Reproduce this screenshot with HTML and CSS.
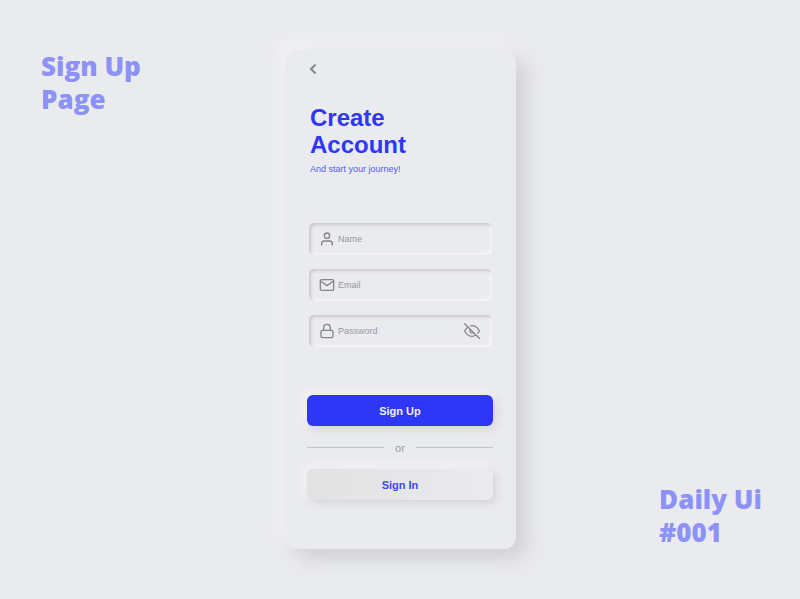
FILE: index.html
```html
<!DOCTYPE html>
<html lang="en">
<head>
<meta charset="utf-8">
<meta name="viewport" content="width=device-width, initial-scale=1">
<title>Create Account</title>
<link rel="stylesheet" href="styles.css">
</head>
<body>
<div class="page">
  <h2 class="caption">Sign Up<br>Page</h2>
  <main class="card">
    <a class="back" href="#" aria-label="Back">
      <svg class="chevron" viewBox="0 0 8 12"><path d="M6.500 1.500 2 6l4.500 4.500"/></svg>
    </a>
    <h1 class="title">Create<br>Account</h1>
    <p class="subtitle">And start your journey!</p>
    <form class="form">
      <div class="fields">
        <label class="field">
          <svg class="icon" viewBox="0 0 24 24"><path d="M20 21v-2a4 4 0 0 0-4-4H8a4 4 0 0 0-4 4v2"/><circle cx="12" cy="7" r="4"/></svg>
          <input class="input" type="text" placeholder="Name" aria-label="Name">
        </label>
        <label class="field">
          <svg class="icon" viewBox="0 0 24 24"><rect x="2" y="4" width="20" height="16" rx="2"/><path d="m2 6 10 7 10-7"/></svg>
          <input class="input" type="email" placeholder="Email" aria-label="Email">
        </label>
        <div class="field">
          <svg class="icon" viewBox="0 0 24 24"><rect x="3" y="11" width="18" height="11" rx="2"/><path d="M7 11V7a5 5 0 0 1 10 0v4"/></svg>
          <input class="input" type="password" placeholder="Password" aria-label="Password">
          <button class="reveal" type="button" aria-label="Show password">
            <svg class="icon" viewBox="0 0 24 24"><path d="M17.940 17.940A10.070 10.070 0 0 1 12 20c-7 0-11-8-11-8a18.450 18.450 0 0 1 5.060-5.940M9.900 4.240A9.120 9.120 0 0 1 12 4c7 0 11 8 11 8a18.500 18.500 0 0 1-2.160 3.190m-6.720-1.070a3 3 0 1 1-4.240-4.240M1 1l22 22"/></svg>
          </button>
        </div>
      </div>
      <button class="button primary" type="submit">Sign Up</button>
      <div class="divider">or</div>
      <button class="button secondary" type="button">Sign In</button>
    </form>
  </main>
  <h2 class="caption caption-end">Daily Ui<br>#001</h2>
</div>
</body>
</html>
```

FILE: styles.css
```css
* {
  box-sizing: border-box;
}

body {
  margin: 0;
  background: #eaebef;
  color: #2d37f5;
  font-family: "Liberation Sans", Arial, sans-serif;
}

.page {
  display: grid;
  grid-template-columns: 1fr 230px 1fr;
  min-height: 100vh;
  padding: 50px 38px 50px 40px;
}

.caption {
  margin: 0;
  padding-left: 1px;
  color: #8d93f6;
  font-family: "Open Sans", "Liberation Sans", sans-serif;
  font-size: 26px;
  font-weight: 800;
  line-height: 33px;
}

.caption-end {
  align-self: end;
  justify-self: end;
}

.card {
  padding: 12px 23px 48px 21px;
  border-radius: 12px;
  background: #eaebef;
  box-shadow: 10px 10px 20px #cfd0d3, -8px -8px 14px #f1f2f3;
}

.back {
  display: flex;
  width: 12px;
  height: 14px;
  align-items: center;
  justify-content: center;
}

.chevron {
  width: 8px;
  height: 12px;
  fill: none;
  stroke: #85868a;
  stroke-width: 2;
}

.title {
  margin: 28px 3px 0;
  font-size: 24px;
  line-height: 27px;
}

.subtitle {
  margin: 5px 3px 0;
  color: #5159f4;
  font-family: "Liberation Sans", Arial, sans-serif;
  font-size: 9px;
  line-height: 12px;
}

.form {
  display: flex;
  margin-top: 48px;
  flex-direction: column;
}

.fields {
  display: grid;
  padding: 0 1px 0 2px;
  gap: 14px;
}

.field {
  display: flex;
  height: 32px;
  padding: 0 12px 0 10px;
  align-items: center;
  gap: 3px;
  border-radius: 5px;
  box-shadow: inset 2px 2px 3px #c9cace, inset -2px -2px 3px #f6f6f8;
}

.icon {
  display: block;
  width: 16px;
  height: 16px;
  flex: none;
  fill: none;
  stroke: #85868a;
  stroke-width: 2;
  stroke-linecap: round;
  stroke-linejoin: round;
}

.input {
  width: 0;
  padding: 0;
  flex: 1;
  border: 0;
  outline: 0;
  background: none;
  color: #85868a;
  font: 9px "Liberation Sans", Arial, sans-serif;
}

.input::placeholder {
  color: #96979b;
}

.reveal {
  padding: 0;
  border: 0;
  background: none;
}

.button {
  height: 31px;
  padding: 0;
  border: 0;
  border-radius: 6px;
  font: bold 11px "Liberation Sans", Arial, sans-serif;
}

.primary {
  margin-top: 48px;
  background: #2d37f5;
  color: #f0f1ff;
  box-shadow: 3px 3px 8px #d2d3d7, -3px -3px 8px #f7f7f9;
}

.secondary {
  background: linear-gradient(100deg, #e2e2e2, #eaebef);
  color: #3d46f4;
  box-shadow: 3px 3px 8px #d2d3d7, -3px -3px 8px #f7f7f9;
}

.divider {
  display: flex;
  height: 43px;
  align-items: center;
  gap: 11px;
  color: #9a9b9f;
  font-size: 11px;
}

.divider::before,
.divider::after {
  height: 1px;
  flex: 1;
  background: #c3c4c8;
  content: "";
}
```
